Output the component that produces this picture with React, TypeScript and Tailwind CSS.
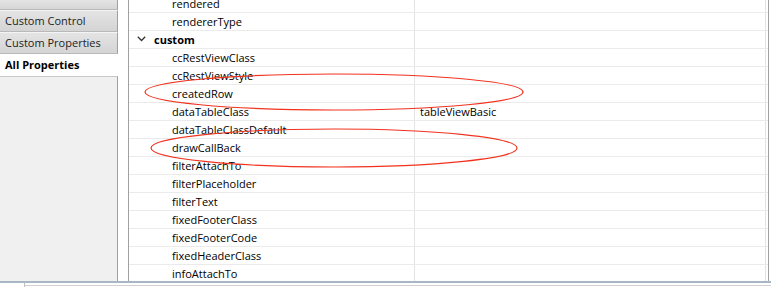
import React from "react";

type Row = {
  name: string;
  value?: string;
  group?: boolean;
};

const rows: Row[] = [
  { name: "rendered" },
  { name: "rendererType" },
  { name: "custom", group: true },
  { name: "ccRestViewClass" },
  { name: "ccRestViewStyle" },
  { name: "createdRow" },
  { name: "dataTableClass", value: "tableViewBasic" },
  { name: "dataTableClassDefault" },
  { name: "drawCallBack" },
  { name: "filterAttachTo" },
  { name: "filterPlaceholder" },
  { name: "filterText" },
  { name: "fixedFooterClass" },
  { name: "fixedFooterCode" },
  { name: "fixedHeaderClass" },
  { name: "infoAttachTo" },
];

function Tab({ label, active }: { label: string; active?: boolean }) {
  if (active) {
    return (
      <div className="h-[22px] flex items-center pl-[5px] pb-[2px] bg-white font-bold text-black">
        {label}
      </div>
    );
  }
  return (
    <div className="h-[22px] flex items-center pl-[5px] pb-[2px] bg-gradient-to-b from-[#e4e4e4] to-[#d4d4d4] border-t border-[#f4f4f4] border-b border-b-[#b9b9b9] border-r border-r-[#a0a0a0] text-[#222]">
      {label}
    </div>
  );
}

export default function App() {
  return (
    <div
      className="relative w-[771px] h-[287px] bg-white overflow-hidden text-[11px] leading-none"
      style={{ fontFamily: '"Open Sans", "Noto Sans", sans-serif' }}
    >
      <div className="flex h-[281px]">
        {/* left tabs */}
        <div className="w-[118px] flex flex-col">
          <div className="h-[10px] bg-gradient-to-b from-[#e4e4e4] to-[#d6d6d6] border-b border-[#b9b9b9] border-r border-r-[#a0a0a0]" />
          <Tab label="Custom Control" />
          <Tab label="Custom Properties" />
          <Tab label="All Properties" active />
          <div className="flex-1 bg-[#f0f0f0] border-t border-[#c8c8c8] border-r border-r-[#a0a0a0]" />
        </div>

        <div className="w-[10px]" />

        {/* property table */}
        <div className="w-[641px] border-l border-r border-[#a0a0a0] overflow-hidden">
          <div className="-mt-[5px] flex flex-col">
            {rows.map((r) => (
              <div key={r.name} className="h-[18px] flex border-b border-[#ebebeb]">
                <div className="w-[286px] shrink-0 flex items-center pb-[1px] border-r border-[#e3e3e3] text-black">
                  {r.group ? (
                    <div className="flex items-center pl-[8px]">
                      <svg width="9" height="6" viewBox="0 0 9 6" className="mr-[8px]">
                        <path d="M0.8 0.8 L4.5 4.5 L8.2 0.8" fill="none" stroke="#333" strokeWidth="1.3" />
                      </svg>
                      <span className="font-bold">{r.name}</span>
                    </div>
                  ) : (
                    <span className="pl-[43px]">{r.name}</span>
                  )}
                </div>
                <div className="flex-1 flex items-center pl-[5px] pb-[1px] border-r border-[#e3e3e3] mr-[2px] text-black">
                  {r.value}
                </div>
              </div>
            ))}
          </div>
        </div>
      </div>

      {/* bottom edge */}
      <div className="h-[2px] bg-[#a9b7c5]" />
      <div className="flex h-[4px]">
        <div className="w-[25px] border-r border-[#c0c0c0]" />
        <div className="flex-1 border-t border-[#d0d0d0] mt-[2px]" />
      </div>

      {/* red annotation ellipses */}
      <svg className="absolute inset-0 pointer-events-none" width="771" height="287">
        <ellipse cx="334" cy="92" rx="189" ry="18" fill="none" stroke="#f2321e" strokeWidth="1.2" />
        <ellipse cx="334" cy="148" rx="183" ry="19" fill="none" stroke="#f2321e" strokeWidth="1.2" />
      </svg>
    </div>
  );
}
